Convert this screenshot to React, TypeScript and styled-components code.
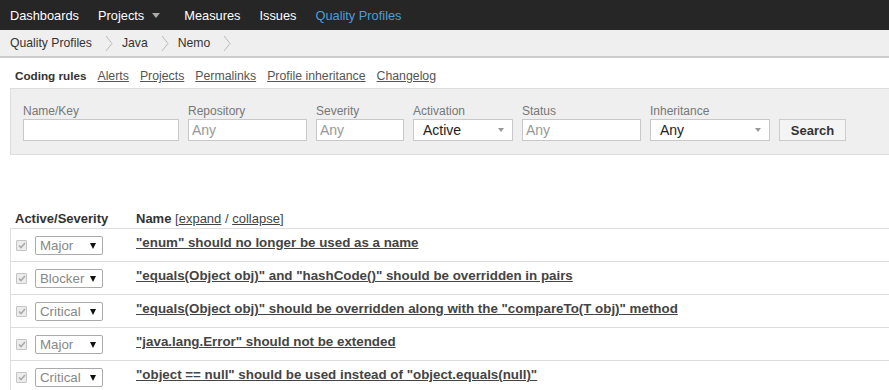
import React from "react";
import styled, { createGlobalStyle } from "styled-components";

const Global = createGlobalStyle`
  html, body {
    margin: 0;
    padding: 0;
    background: #fff;
    font-family: "Liberation Sans", Arial, sans-serif;
    color: #444;
  }
`;

const TopNav = styled.div`
  height: 30px;
  background: #262626;
  display: flex;
  align-items: center;
  padding-left: 10px;
  font-size: 12.8px;
`;

const NavItem = styled.a<{ $active?: boolean }>`
  color: ${(p) => (p.$active ? "#4b9fd6" : "#fff")};
  text-decoration: none;
  margin-right: 19px;
  display: flex;
  align-items: center;
`;

const NavArrow = styled.span`
  margin-left: 8px;
  margin-right: 5px;
  width: 0;
  height: 0;
  border-left: 4px solid transparent;
  border-right: 4px solid transparent;
  border-top: 5px solid #aaa;
`;

const Crumbs = styled.div`
  height: 26px;
  background: #efefef;
  border-bottom: 2px solid #ccc;
  display: flex;
  align-items: center;
  padding-left: 10px;
  font-size: 12.2px;
  color: #333;
`;

const Crumb = styled.span`
  display: flex;
  align-items: center;
  svg {
    margin: 0 9px 0 13px;
  }
`;

const Chevron = () => (
  <svg width="8" height="17" viewBox="0 0 8 17">
    <path d="M1 1 L7 8.5 L1 16" fill="none" stroke="#bbb" strokeWidth="1" />
  </svg>
);

const Content = styled.div`
  padding: 0 0 0 10px;
`;

const Tabs = styled.div`
  display: flex;
  gap: 11px;
  padding: 11px 0 0 5px;
  height: 19px;
  font-size: 12.3px;
`;

const Tab = styled.a<{ $current?: boolean }>`
  color: ${(p) => (p.$current ? "#333" : "#555")};
  font-weight: ${(p) => (p.$current ? "bold" : "normal")};
  font-size: ${(p) => (p.$current ? "11.7px" : "inherit")};
  text-decoration: ${(p) => (p.$current ? "none" : "underline")};
`;

const Filters = styled.div`
  background: #efefef;
  border: 1px solid #ddd;
  border-right: none;
  padding: 0 0 0 12px;
  display: flex;
  align-items: flex-start;
  gap: 9px;
  box-sizing: border-box;
  height: 67px;
`;

const Field = styled.div`
  display: flex;
  flex-direction: column;
  padding-top: 15px;
`;

const Label = styled.span`
  font-size: 12px;
  color: #777;
  line-height: 15px;
  height: 15px;
`;

const TextBox = styled.div<{ $w: number }>`
  width: ${(p) => p.$w}px;
  height: 22px;
  box-sizing: border-box;
  border: 1px solid #c8c8c8;
  background: #fff;
  font-size: 14px;
  color: #999;
  padding-left: 3px;
  line-height: 20px;
`;

const SelectBox = styled.div<{ $w: number }>`
  width: ${(p) => p.$w}px;
  height: 22px;
  box-sizing: border-box;
  border: 1px solid #c8c8c8;
  background: #fff;
  font-size: 14px;
  color: #222;
  padding: 0 8px 0 9px;
  display: flex;
  align-items: center;
  justify-content: space-between;
`;

const SmallArrow = styled.span`
  width: 0;
  height: 0;
  border-left: 3px solid transparent;
  border-right: 3px solid transparent;
  border-top: 4px solid #999;
`;

const SearchButton = styled.button`
  margin-top: 30px;
  height: 22px;
  width: 67px;
  border: 1px solid #ccc;
  background: #f4f4f4;
  font-family: inherit;
  font-weight: bold;
  font-size: 13px;
  color: #333;
  padding: 0;
`;

const Table = styled.div`
  margin-top: 53px;
`;

const Head = styled.div`
  display: flex;
  height: 20px;
  align-items: center;
  padding-left: 5px;
  font-size: 13px;
  border-bottom: 1px solid #ddd;
`;

const HeadSeverity = styled.span`
  width: 121px;
  font-weight: bold;
  color: #333;
`;

const HeadName = styled.span`
  font-weight: bold;
  color: #333;
  span {
    font-weight: normal;
    color: #444;
  }
  a {
    color: #444;
    text-decoration: underline;
  }
`;

const Row = styled.div`
  display: flex;
  height: 32px;
  border-left: 1px solid #ddd;
  border-bottom: 1px solid #ddd;
  padding-left: 5px;
`;

const SevCell = styled.div`
  width: 120px;
  display: flex;
  align-items: center;
  gap: 8px;
  padding-top: 1px;
`;

const Check = styled.span`
  width: 11px;
  height: 11px;
  box-sizing: border-box;
  border: 1px solid #c4c4c4;
  background: #ececec;
  border-radius: 1px;
  display: flex;
  align-items: center;
  justify-content: center;
`;

const SevSelect = styled.div`
  width: 68px;
  height: 19px;
  box-sizing: border-box;
  border: 1px solid #aaa;
  border-radius: 2px;
  background: #fff;
  display: flex;
  align-items: center;
  justify-content: space-between;
  padding: 0 6px 0 4px;
  font-size: 13.3px;
  color: #888;
`;

const BlackArrow = styled.span`
  width: 0;
  height: 0;
  border-left: 3px solid transparent;
  border-right: 3px solid transparent;
  border-top: 6px solid #111;
`;

const RuleName = styled.a`
  padding-top: 6px;
  font-size: 13.35px;
  font-weight: bold;
  color: #444;
  text-decoration: underline;
`;

const rules = [
  { sev: "Major", name: '"enum" should no longer be used as a name' },
  { sev: "Blocker", name: '"equals(Object obj)" and "hashCode()" should be overridden in pairs' },
  {
    sev: "Critical",
    name: '"equals(Object obj)" should be overridden along with the "compareTo(T obj)" method',
  },
  { sev: "Major", name: '"java.lang.Error" should not be extended' },
  { sev: "Critical", name: '"object == null" should be used instead of "object.equals(null)"' },
];

const App = () => {
  return (
    <>
      <Global />
      <TopNav>
        <NavItem>Dashboards</NavItem>
        <NavItem>
          Projects
          <NavArrow />
        </NavItem>
        <NavItem>Measures</NavItem>
        <NavItem>Issues</NavItem>
        <NavItem $active>Quality Profiles</NavItem>
      </TopNav>
      <Crumbs>
        <Crumb>
          Quality Profiles
          <Chevron />
        </Crumb>
        <Crumb>
          Java
          <Chevron />
        </Crumb>
        <Crumb>
          Nemo
          <Chevron />
        </Crumb>
      </Crumbs>
      <Content>
        <Tabs>
          <Tab $current>Coding rules</Tab>
          <Tab>Alerts</Tab>
          <Tab>Projects</Tab>
          <Tab>Permalinks</Tab>
          <Tab>Profile inheritance</Tab>
          <Tab>Changelog</Tab>
        </Tabs>
        <Filters>
          <Field>
            <Label>Name/Key</Label>
            <TextBox $w={156} />
          </Field>
          <Field>
            <Label>Repository</Label>
            <TextBox $w={119}>Any</TextBox>
          </Field>
          <Field>
            <Label>Severity</Label>
            <TextBox $w={88}>Any</TextBox>
          </Field>
          <Field>
            <Label>Activation</Label>
            <SelectBox $w={100}>
              Active
              <SmallArrow />
            </SelectBox>
          </Field>
          <Field>
            <Label>Status</Label>
            <TextBox $w={119}>Any</TextBox>
          </Field>
          <Field>
            <Label>Inheritance</Label>
            <SelectBox $w={120}>
              Any
              <SmallArrow />
            </SelectBox>
          </Field>
          <SearchButton>Search</SearchButton>
        </Filters>
        <Table>
          <Head>
            <HeadSeverity>Active/Severity</HeadSeverity>
            <HeadName>
              Name{" "}
              <span>
                [<a>expand</a> / <a>collapse</a>]
              </span>
            </HeadName>
          </Head>
          {rules.map((r, i) => (
            <Row key={i}>
              <SevCell>
                <Check>
                  <svg width="8" height="7" viewBox="0 0 8 7">
                    <path d="M1 3.5 L3 5.5 L7 1" fill="none" stroke="#aaa" strokeWidth="1.6" />
                  </svg>
                </Check>
                <SevSelect>
                  {r.sev}
                  <BlackArrow />
                </SevSelect>
              </SevCell>
              <RuleName>{r.name}</RuleName>
            </Row>
          ))}
        </Table>
      </Content>
    </>
  );
};

export default App;
